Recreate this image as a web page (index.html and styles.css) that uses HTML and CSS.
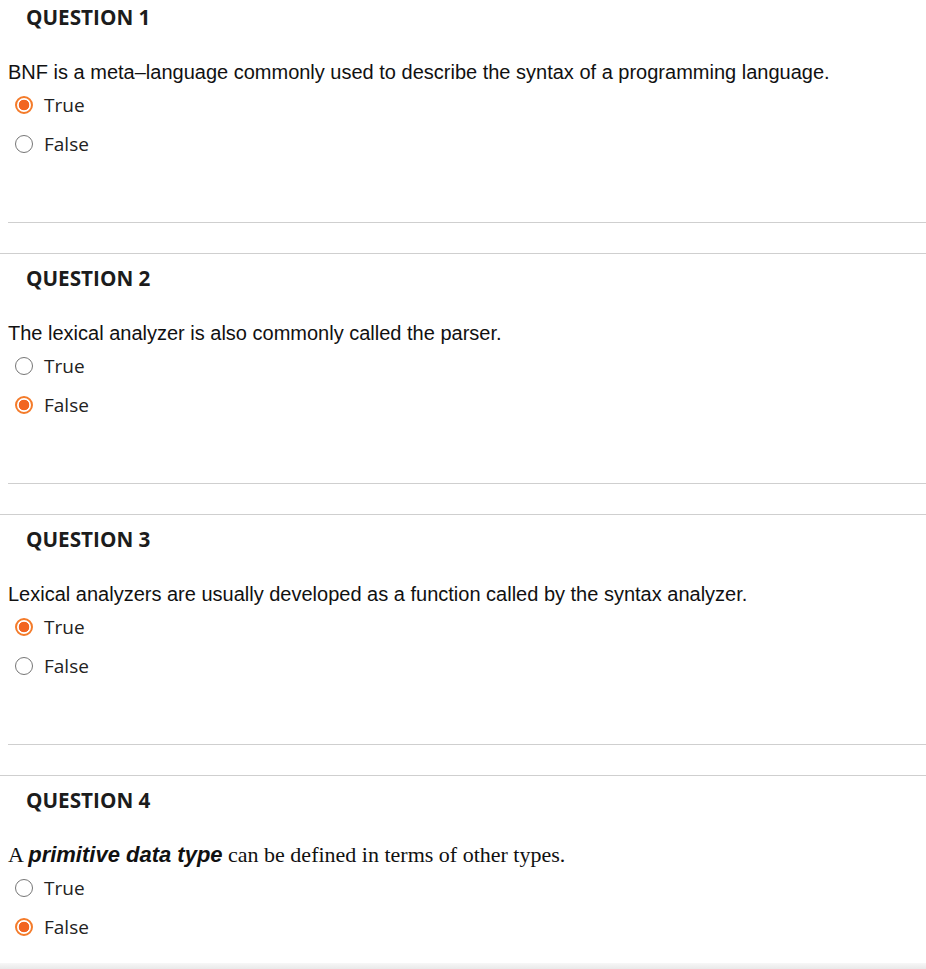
FILE: index.html
```html
<!DOCTYPE html>
<html lang="en">
<head>
<meta charset="utf-8">
<title>Quiz</title>
<link rel="stylesheet" href="styles.css">
</head>
<body>
<div class="quiz">
  <section class="question">
    <h2 class="q-title">QUESTION 1</h2>
    <p class="q-text">BNF is a meta–language commonly used to describe the syntax of a programming language.</p>
    <ul class="answers">
      <li class="answer"><span class="radio checked"></span><span class="label">True</span></li>
      <li class="answer"><span class="radio"></span><span class="label">False</span></li>
    </ul>
    <div class="divider"></div>
  </section>
  <section class="question">
    <h2 class="q-title">QUESTION 2</h2>
    <p class="q-text">The lexical analyzer is also commonly called the parser.</p>
    <ul class="answers">
      <li class="answer"><span class="radio"></span><span class="label">True</span></li>
      <li class="answer"><span class="radio checked"></span><span class="label">False</span></li>
    </ul>
    <div class="divider"></div>
  </section>
  <section class="question">
    <h2 class="q-title">QUESTION 3</h2>
    <p class="q-text">Lexical analyzers are usually developed as a function called by the syntax analyzer.</p>
    <ul class="answers">
      <li class="answer"><span class="radio checked"></span><span class="label">True</span></li>
      <li class="answer"><span class="radio"></span><span class="label">False</span></li>
    </ul>
    <div class="divider"></div>
  </section>
  <section class="question">
    <h2 class="q-title">QUESTION 4</h2>
    <p class="q-text serif">A <strong class="term">primitive data type</strong> can be defined in terms of other types.</p>
    <ul class="answers">
      <li class="answer"><span class="radio"></span><span class="label">True</span></li>
      <li class="answer"><span class="radio checked"></span><span class="label">False</span></li>
    </ul>
  </section>
  <div class="footer-shade"></div>
</div>
</body>
</html>
```
FILE: styles.css
```css
html, body {
  margin: 0;
  padding: 0;
  background: #ffffff;
}

.quiz {
  display: flex;
  flex-direction: column;
}

.question {
  border-top: 1px solid #cfcfcf;
  padding-top: 10px;
}

.question:first-child {
  border-top: none;
  padding-top: 3px;
}

.q-title {
  margin: 0;
  padding-left: 26px;
  font-family: "Open Sans", sans-serif;
  font-weight: 700;
  font-size: 20.7px;
  line-height: 28px;
  color: #1c1c1c;
}

.q-text {
  margin: 29px 0 0 0;
  padding-left: 8px;
  font-family: "Liberation Sans", Arial, sans-serif;
  font-size: 20px;
  line-height: 24px;
  color: #111111;
}

.q-text.serif {
  font-family: "Liberation Serif", "Times New Roman", serif;
  font-size: 22px;
}

.term {
  font-family: "Liberation Sans", Arial, sans-serif;
  font-style: italic;
  font-weight: 700;
  font-size: 22px;
}

.answers {
  list-style: none;
  margin: 1px 0 0 0;
  padding: 0 0 0 15px;
  display: flex;
  flex-direction: column;
}

.answer {
  height: 39px;
  display: flex;
  align-items: center;
  gap: 11px;
}

.radio {
  width: 18px;
  height: 18px;
  box-sizing: border-box;
  border-radius: 50%;
  border: 1.5px solid #767676;
  background: #ffffff;
  flex: none;
}

.radio.checked {
  border: 2px solid #f47b2a;
  background: radial-gradient(circle, #f26522 0 5px, #ffffff 5.6px);
}

.label {
  font-family: "Open Sans", sans-serif;
  font-size: 19px;
  color: #222222;
}

.divider {
  margin: 59px 0 30px 8px;
  border-top: 1px solid #cfcfcf;
}

.footer-shade {
  margin-top: 17px;
  height: 8px;
  background: linear-gradient(#f7f7f7, #e4e4e4);
}
```
